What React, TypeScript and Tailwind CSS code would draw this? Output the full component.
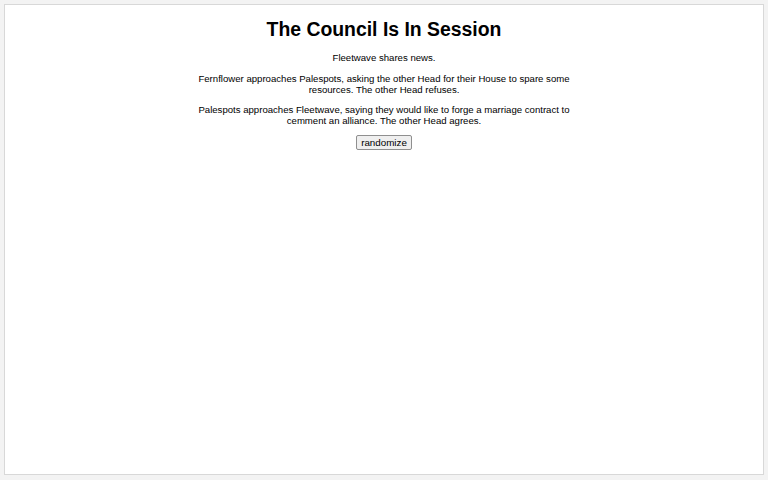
const events = [
  "Fleetwave shares news.",
  "Fernflower approaches Palespots, asking the other Head for their House to spare some resources. The other Head refuses.",
  "Palespots approaches Fleetwave, saying they would like to forge a marriage contract to cemment an alliance. The other Head agrees.",
];

export default function App() {
  return (
    <div className="h-[480px] w-[768px] bg-[#f3f3f3] p-[4px] font-['Liberation_Sans',Arial,sans-serif] text-black">
      <div className="flex h-[471px] flex-col items-center border border-[#d8d8d8] bg-white pt-[13px]">
        <h1 className="text-[19.4px] font-bold leading-[22px]">The Council Is In Session</h1>
        <div className="mt-[12px] flex w-[378px] flex-col gap-[9.5px] text-center text-[9.6px] leading-[11px]">
          {events.map((e) => (
            <p key={e}>{e}</p>
          ))}
        </div>
        <button className="mt-[9px] rounded-[2px] border border-[#8f8f8f] bg-[#efefef] px-[4px] py-[1px] text-[9.8px] leading-[11px]">
          randomize
        </button>
      </div>
    </div>
  );
}
